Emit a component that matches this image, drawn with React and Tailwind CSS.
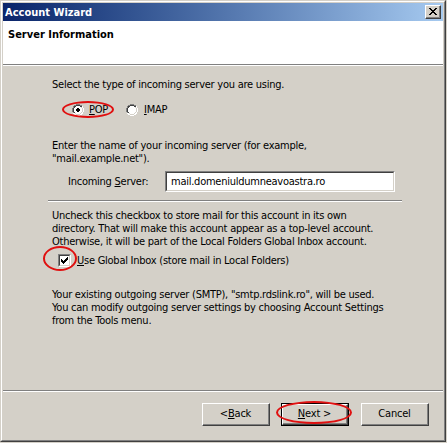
import React from "react";

const font = { fontFamily: '"DejaVu Sans Condensed", "DejaVu Sans", sans-serif' };

const Radio = ({ checked }) => (
  <svg width="12" height="12" viewBox="0 0 12 12" className="shrink-0">
    <path d="M4 0h4v1h2v1h1v2h1v4h-1v2h-1v1h-2v1H4v-1H2v-1H1V8H0V4h1V2h1V1h2z" fill="#ffffff" />
    <path d="M4 0h4v1H4zM2 1h2v1H2zM8 1h2v1H8zM1 2h1v2H1zM0 4h1v4H0zM1 8h1v1H1z" fill="#808080" />
    <path d="M4 1h4v1H4zM2 2h2v1H2zM8 2h2v1H8zM2 3h1v1H2zM1 4h1v4H1zM2 8h1v1H2z" fill="#404040" />
    <path d="M10 2h1v2h-1zM11 4h1v4h-1zM10 8h1v2h-1zM8 10h2v1H8zM4 11h4v1H4zM2 10h2v1H2z" fill="#ffffff" />
    <path d="M9 3h1v1H9zM10 4h1v4h-1zM9 8h1v1H9zM8 9h1v1H8zM4 10h4v1H4zM3 9h1v1H3z" fill="#d4d0c8" />
    {checked && <path d="M5 4h2v1h1v2H7v1H5V7H4V5h1z" fill="#000000" />}
  </svg>
);

const Checkbox = () => (
  <div className="w-[13px] h-[13px] shrink-0 border-t border-l border-t-[#808080] border-l-[#808080] border-r border-b border-r-white border-b-white">
    <div className="w-full h-full bg-white border-t border-l border-t-[#404040] border-l-[#404040] border-r border-b border-r-[#d4d0c8] border-b-[#d4d0c8] flex items-center justify-center">
      <svg width="7" height="7" viewBox="0 0 7 7">
        <path d="M6 0h1v3H6v1H5v1H4v1H3v1H2V6H1V5H0V2h1v1h1v1h1V3h1V2h1V1h1z" fill="#000" />
      </svg>
    </div>
  </div>
);

const Button = ({ children, isDefault, className = "" }) => (
  <div className={`w-[68px] h-[23px] ${isDefault ? "border border-black" : ""} ${className}`}>
    <div className="w-full h-full border-t border-l border-t-white border-l-white border-r border-b border-r-[#404040] border-b-[#404040]">
      <div className="w-full h-full border-r border-b border-r-[#808080] border-b-[#808080] flex items-center justify-center text-[11px] text-black tracking-[-0.2px]">
        {children}
      </div>
    </div>
  </div>
);

export default function App() {
  return (
    <div className="relative w-[447px] h-[443px] bg-[#d4d0c8] overflow-hidden" style={font}>
      {/* window frame */}
      <div className="w-[446px] h-[442px] border-t border-l border-t-[#d4d0c8] border-l-[#d4d0c8] border-r border-b border-r-[#404040] border-b-[#404040]">
        <div className="w-full h-full border-t border-l border-t-white border-l-white border-r border-b border-r-[#808080] border-b-[#808080] p-px flex flex-col">
          {/* title bar */}
          <div className="h-[18px] shrink-0 flex items-center justify-between pl-[2px] pr-[2px] bg-gradient-to-r from-[#0a246a] to-[#a6caf0]">
            <span className="text-white font-bold text-[11px] leading-none">Account Wizard</span>
            <div className="w-[16px] h-[14px] border-t border-l border-t-white border-l-white border-r border-b border-r-[#404040] border-b-[#404040] bg-[#d4d0c8]">
              <div className="w-full h-full border-r border-b border-r-[#808080] border-b-[#808080] flex items-center justify-center">
                <svg width="8" height="7" viewBox="0 0 8 7">
                  <path d="M0 0h2v1h1v1h2V1h1V0h2v1H7v1H6v1H5v1h1v1h1v1h1v1H6V6H5V5H3v1H2v1H0V6h1V5h1V4h1V3H2V2H1V1H0z" fill="#000" />
                </svg>
              </div>
            </div>
          </div>

          {/* header */}
          <div className="h-[43px] shrink-0 bg-white pl-[5px] pt-[5px] leading-[13px]">
            <span className="font-bold text-[11px] leading-[13px] text-black">Server Information</span>
          </div>
          <div className="h-px bg-[#808080]" />
          <div className="h-px bg-white" />

          {/* body */}
          <div className="flex-1 text-[11px] leading-[13px] text-black tracking-[-0.25px]">
            <div className="ml-[45px] w-[354px]">
              <p className="mt-[12px] pl-[4px] whitespace-nowrap">Select the type of incoming server you are using.</p>

              <div className="mt-[12px] h-[13px] flex items-center pl-[24px]">
                <Radio checked />
                <span className="ml-[5px]"><u>P</u>OP</span>
                <span className="ml-[18px] flex"><Radio /></span>
                <span className="ml-[6px]"><u>I</u>MAP</span>
              </div>

              <p className="mt-[23px] pl-[4px] whitespace-nowrap">
                Enter the name of your incoming server (for example,
                <br />
                "mail.example.net").
              </p>

              <div className="mt-[6px] h-[21px] flex items-center">
                <span className="ml-[20px] w-[97px]">Incoming <u>S</u>erver:</span>
                <div className="w-[230px] h-[21px] border-t border-l border-t-[#808080] border-l-[#808080] border-r border-b border-r-white border-b-white">
                  <div className="w-full h-full bg-white border-t border-l border-t-[#404040] border-l-[#404040] border-r border-b border-r-[#d4d0c8] border-b-[#d4d0c8] flex items-center pl-[4px]">
                    mail.domeniuldumneavoastra.ro
                  </div>
                </div>
              </div>

              <div className="mt-[8px] h-px bg-[#808080]" />
              <div className="h-px bg-white" />

              <p className="mt-[7px] pl-[4px] whitespace-nowrap">
                Uncheck this checkbox to store mail for this account in its own
                <br />
                directory. That will make this account appear as a top-level account.
                <br />
                Otherwise, it will be part of the Local Folders Global Inbox account.
              </p>

              <div className="mt-[6px] h-[13px] flex items-center pl-[10px]">
                <Checkbox />
                <span className="ml-[6px]"><u>U</u>se Global Inbox (store mail in Local Folders)</span>
              </div>

              <p className="mt-[21px] pl-[4px] whitespace-nowrap">
                Your existing outgoing server (SMTP), "smtp.rdslink.ro", will be used.
                <br />
                You can modify outgoing server settings by choosing Account Settings
                <br />
                from the Tools menu.
              </p>
            </div>
          </div>

          {/* bottom separator */}
          <div className="h-px bg-[#808080]" />
          <div className="h-px bg-white" />

          {/* buttons */}
          <div className="h-[47px] shrink-0 flex justify-end items-start pt-[11px] pr-[14px]">
            <Button className="mr-[11px]">&lt; <u>B</u>ack</Button>
            <Button isDefault className="mr-[12px]"><u>N</u>ext &gt;</Button>
            <Button>Cancel</Button>
          </div>
        </div>
      </div>

      {/* red annotation ellipses */}
      <div className="absolute left-[62px] top-[101px] w-[52px] h-[17px] rounded-[50%] border-2 border-[#e01010]" />
      <div className="absolute left-[43px] top-[246px] w-[34px] h-[25px] rounded-[50%] border-2 border-[#e01010]" />
      <div className="absolute left-[276px] top-[401px] w-[76px] h-[23px] rounded-[50%] border-2 border-[#e01010]" />
    </div>
  );
}
